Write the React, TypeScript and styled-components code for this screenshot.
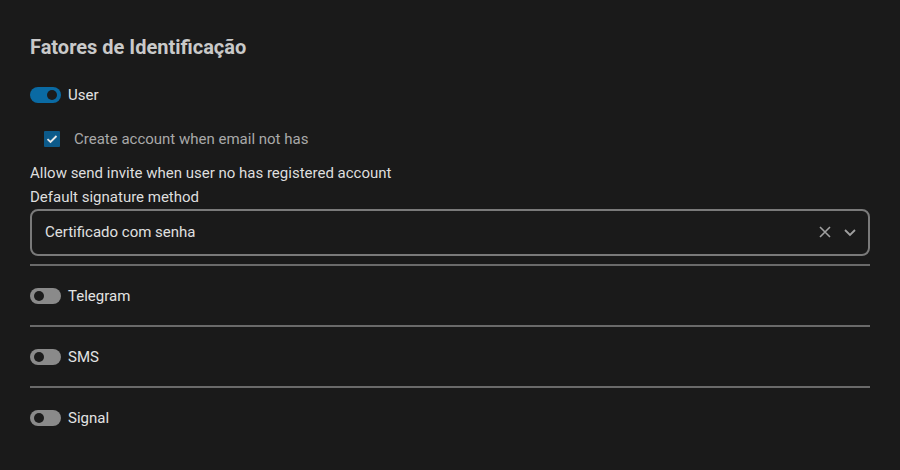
import React from "react";
import styled, { createGlobalStyle } from "styled-components";

const Global = createGlobalStyle`
  html, body { margin: 0; padding: 0; background: #1a1a1a; }
  body { font-family: Roboto, "Liberation Sans", sans-serif; }
`;

const Page = styled.div`
  box-sizing: border-box;
  width: 900px;
  height: 470px;
  background: #1a1a1a;
  padding: 34px 30px 0 30px;
  color: #e0e0e0;
`;

const Title = styled.h2`
  margin: 0;
  font-size: 20px;
  font-weight: 700;
  color: #c9c9c9;
  line-height: 27px;
`;

const ToggleRow = styled.div<{ $top?: number }>`
  display: flex;
  align-items: center;
  gap: 7px;
  height: 22px;
  margin-top: ${(p) => p.$top ?? 0}px;
`;

const Track = styled.span<{ $on?: boolean }>`
  position: relative;
  display: inline-block;
  width: 31px;
  height: 16px;
  border-radius: 8px;
  background: ${(p) => (p.$on ? "#0a6aa3" : "#8a8a8a")};
`;

const Knob = styled.span<{ $on?: boolean }>`
  position: absolute;
  top: 3px;
  left: ${(p) => (p.$on ? "17px" : "4px")};
  width: 10px;
  height: 10px;
  border-radius: 50%;
  background: #1c1c1c;
`;

const Label = styled.span`
  font-size: 15px;
  color: #e3e3e3;
`;

const CheckRow = styled.div`
  display: flex;
  align-items: center;
  gap: 14px;
  margin-top: 23px;
  padding-left: 14px;
  height: 20px;
`;

const Box = styled.span`
  display: inline-flex;
  align-items: center;
  justify-content: center;
  width: 16px;
  height: 16px;
  background: #0c5a8a;
  border-radius: 1px;
`;

const CheckLabel = styled.span`
  font-size: 15px;
  color: #a9a9a9;
`;

const Text = styled.div<{ $top: number }>`
  font-size: 15px;
  color: #dedede;
  margin-top: ${(p) => p.$top}px;
  line-height: 20px;
`;

const Select = styled.div`
  box-sizing: border-box;
  margin-top: 2px;
  height: 47px;
  border: 2px solid #7a7a7a;
  border-radius: 8px;
  display: flex;
  align-items: center;
  padding: 0 10px 2px 13px;
`;

const SelectValue = styled.span`
  flex: 1;
  font-size: 15px;
  color: #e0e0e0;
`;

const Icons = styled.span`
  display: flex;
  align-items: center;
  gap: 9px;
  color: #a0a0a0;
`;

const Divider = styled.div<{ $top: number }>`
  height: 2px;
  background: #6a6a6a;
  margin-top: ${(p) => p.$top}px;
`;

const Toggle = ({ on, label, top }: { on?: boolean; label: string; top?: number }) => (
  <ToggleRow $top={top}>
    <Track $on={on}>
      <Knob $on={on} />
    </Track>
    <Label>{label}</Label>
  </ToggleRow>
);

export default function App() {
  return (
    <Page>
      <Global />
      <Title>Fatores de Identificação</Title>
      <Toggle on label="User" top={23} />
      <CheckRow>
        <Box>
          <svg width="12" height="10" viewBox="0 0 12 10">
            <path d="M1.5 5.2 L4.5 8 L10.5 2" stroke="#e8e8e8" strokeWidth="1.8" fill="none" />
          </svg>
        </Box>
        <CheckLabel>Create account when email not has</CheckLabel>
      </CheckRow>
      <Text $top={14}>Allow send invite when user no has registered account</Text>
      <Text $top={4}>Default signature method</Text>
      <Select>
        <SelectValue>Certificado com senha</SelectValue>
        <Icons>
          <svg width="16" height="16" viewBox="0 0 16 16">
            <path d="M3 3 L13 13 M13 3 L3 13" stroke="#a0a0a0" strokeWidth="1.6" />
          </svg>
          <svg width="16" height="16" viewBox="0 0 16 16">
            <path d="M3 6 L8 11 L13 6" stroke="#a0a0a0" strokeWidth="1.8" fill="none" />
          </svg>
        </Icons>
      </Select>
      <Divider $top={8} />
      <Toggle label="Telegram" top={19} />
      <Divider $top={18} />
      <Toggle label="SMS" top={19} />
      <Divider $top={18} />
      <Toggle label="Signal" top={19} />
    </Page>
  );
}
